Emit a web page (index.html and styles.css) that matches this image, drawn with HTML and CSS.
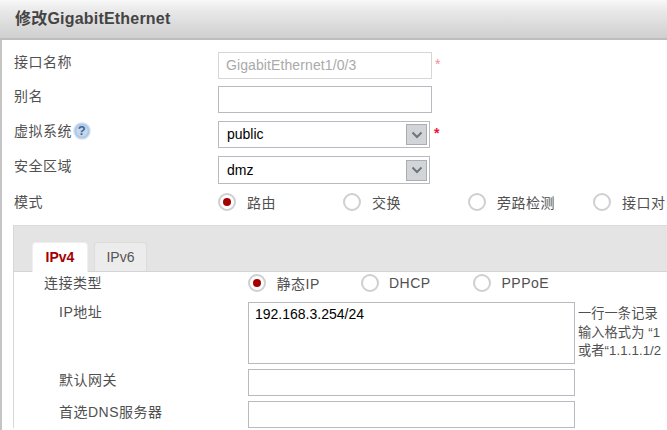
FILE: index.html
```html
<!DOCTYPE html>
<html lang="zh">
<head>
  <meta charset="UTF-8">
  <meta name="viewport" content="width=device-width, initial-scale=1.0">
  <title>修改GigabitEthernet</title>
  <link rel="stylesheet" href="styles.css">
</head>
<body>
  <div class="dialog-title">修改GigabitEthernet</div>

  <div class="dialog-body">
    <!-- Interface fields -->
    <div class="row row-name">
      <div class="label">接口名称</div>
      <div class="field field-disabled">GigabitEthernet1/0/3</div>
      <span class="required required-faded">*</span>
    </div>
    <div class="row row-alias">
      <div class="label">别名</div>
      <div class="field"></div>
    </div>
    <div class="row row-vsys">
      <div class="label">虚拟系统<svg class="help-icon" viewBox="0 0 18 18" width="18" height="18">
          <circle cx="9" cy="9" r="8" fill="#a9c6e6" stroke="#cfdeee" stroke-width="1.4"/>
          <circle cx="9" cy="9" r="5.8" fill="#c6d8ec"/>
          <text x="9" y="13.2" text-anchor="middle" class="help-mark">?</text>
        </svg></div>
      <div class="select"><span>public</span><span class="select-btn"><svg viewBox="0 0 12 8" width="12" height="8"><path d="M1.5 1.5 L6 6 L10.5 1.5" fill="none" stroke="#70757c" stroke-width="2"/></svg></span></div>
      <span class="required">*</span>
    </div>
    <div class="row row-zone">
      <div class="label">安全区域</div>
      <div class="select select-tall"><span>dmz</span><span class="select-btn"><svg viewBox="0 0 12 8" width="12" height="8"><path d="M1.5 1.5 L6 6 L10.5 1.5" fill="none" stroke="#70757c" stroke-width="2"/></svg></span></div>
    </div>
    <div class="row row-mode">
      <div class="label">模式</div>
      <div class="radio-group">
        <div class="radio-item"><span class="radio checked"></span>路由</div>
        <div class="radio-item"><span class="radio"></span>交换</div>
        <div class="radio-item"><span class="radio"></span>旁路检测</div>
        <div class="radio-item"><span class="radio"></span>接口对</div>
      </div>
    </div>

    <!-- IP tabs -->
    <div class="tab-panel">
      <div class="tab-strip">
        <div class="tab active">IPv4</div>
        <div class="tab">IPv6</div>
      </div>
      <div class="tab-content">
        <div class="row row-conn">
          <div class="label">连接类型</div>
          <div class="radio-group radio-group-small">
            <div class="radio-item"><span class="radio checked"></span>静态IP</div>
            <div class="radio-item"><span class="radio"></span>DHCP</div>
            <div class="radio-item"><span class="radio"></span>PPPoE</div>
          </div>
        </div>
        <div class="row row-ip">
          <div class="label">IP地址</div>
          <div class="field field-area">192.168.3.254/24</div>
          <div class="hint">一行一条记录<br>输入格式为 “1<br>或者“1.1.1.1/2</div>
        </div>
        <div class="row row-gateway">
          <div class="label">默认网关</div>
          <div class="field field-wide"></div>
        </div>
        <div class="row row-dns">
          <div class="label">首选DNS服务器</div>
          <div class="field field-wide"></div>
        </div>
      </div>
    </div>
  </div>
</body>
</html>
```

FILE: styles.css
```css
/* General styles */
html, body {
  margin: 0;
  padding: 0;
  height: 430px;
  overflow: hidden;
  background: #fff;
}

body {
  font-family: 'Liberation Sans', 'Noto Sans CJK SC', sans-serif;
  font-size: 14px;
  color: #505050;
}

/* Title bar */
.dialog-title {
  height: 38px;
  line-height: 38px;
  padding-left: 15px;
  font-size: 16px;
  letter-spacing: 0.2px;
  font-weight: bold;
  color: #444;
  background: linear-gradient(#f8f8f8, #e8e8e8 30%, #cfcfcf);
  border-bottom: 2px solid #bdbdbd;
}

.dialog-body {
  height: 390px;
  padding-top: 12px;
  box-sizing: border-box;
  border-left: 2px solid #c4c4c4;
  overflow: hidden;
}

/* Form rows */
.row {
  display: flex;
  white-space: nowrap;
}

.label {
  width: 204px;
  padding-left: 12px;
  line-height: 20px;
  letter-spacing: 0.5px;
  flex-shrink: 0;
  display: flex;
  align-items: center;
  align-self: flex-start;
}

.row-name { height: 34px; }
.row-alias { height: 35px; }
.row-vsys { height: 35px; }
.row-zone { height: 34px; }
.row-mode { height: 24px; align-items: center; }
.row-mode .label { align-self: center; }

.help-icon {
  margin-left: 1px;
}

.help-mark {
  font-family: 'Liberation Sans', sans-serif;
  font-size: 13px;
  font-weight: bold;
  fill: #3f6398;
}

.field {
  width: 214px;
  height: 27px;
  box-sizing: border-box;
  border: 1px solid #b9b9c0;
  background: #fff;
  padding-left: 8px;
  line-height: 25px;
  color: #000;
}

.field-disabled {
  border-color: #d6d6d6;
  color: #aaa;
  padding-left: 7px;
  letter-spacing: 0.1px;
}

.field-wide {
  width: 327px;
}

.field-area {
  width: 327px;
  height: 62px;
  padding-left: 6px;
  line-height: 22px;
  flex-shrink: 0;
}

.select {
  width: 212px;
  height: 27px;
  box-sizing: border-box;
  border: 1px solid #b9b9c0;
  padding: 0 2px 0 8px;
  line-height: 25px;
  color: #000;
  display: flex;
  justify-content: space-between;
  align-items: center;
}

.select-tall {
  height: 28px;
}

.select-btn {
  width: 21px;
  height: 21px;
  box-sizing: border-box;
  border: 1px solid #a9aeb4;
  background: #d2d5d8;
  display: flex;
  justify-content: center;
  align-items: center;
}

.required {
  margin-left: 4px;
  color: #f01030;
  font-size: 14px;
  line-height: 24px;
  font-weight: bold;
}

.required-faded {
  color: #f58a96;
  margin-left: 3px;
  font-weight: normal;
}

/* Radios */
.radio-group {
  display: flex;
}

.radio-item {
  width: 125px;
  letter-spacing: 0.5px;
  display: flex;
  align-items: center;
  flex-shrink: 0;
}

.radio-item:last-child {
  width: auto;
}

.radio {
  width: 18px;
  height: 18px;
  box-sizing: border-box;
  border: 2px solid #cfcfcf;
  border-radius: 50%;
  background: #fff;
  margin-right: 11px;
  display: flex;
  justify-content: center;
  align-items: center;
}

.radio.checked::after {
  content: "";
  width: 8px;
  height: 8px;
  border-radius: 50%;
  background: #a40000;
}

.radio-group-small .radio-item {
  width: 112.5px;
}

.radio-group-small .radio {
  margin-right: 10.5px;
}

/* Tab panel */
.tab-panel {
  margin: 11px 0 0 11px;
  border-left: 1px solid #d8d8d8;
  border-top: 1px solid #dcdcdc;
}

.tab-strip {
  height: 46px;
  padding-left: 18px;
  box-sizing: border-box;
  background: #e4e4e4;
  border-bottom: 1px solid #d4d4d4;
  display: flex;
  align-items: flex-end;
  gap: 6px;
}

.tab {
  width: 53px;
  height: 29px;
  line-height: 28px;
  text-align: center;
  box-sizing: border-box;
  background: #ececec;
  border: 1px solid #dcdcdc;
  border-bottom: none;
  border-radius: 4px 4px 0 0;
  color: #555;
  font-size: 14px;
}

.tab.active {
  width: 56px;
  height: 30px;
  margin-bottom: -1px;
  background: #fff;
  border-color: #eee;
  color: #a40000;
  font-weight: bold;
}

.tab-content .label {
  width: 203px;
  padding-left: 45px;
  box-sizing: border-box;
  flex-shrink: 0;
}

.row-conn {
  height: 30px;
  padding-bottom: 8px;
  box-sizing: border-box;
  align-items: center;
}

.row-conn .label {
  padding-left: 30px;
  align-self: center;
}

.row-conn .radio-group {
  margin-left: 31px;
}

.row-ip .field,
.row-gateway .field,
.row-dns .field {
  margin-left: 31px;
}

.row-ip { height: 67px; }
.row-gateway { height: 32px; }

.row-gateway .label,
.row-dns .label { margin-top: 1px; }

.hint {
  margin: 3px 0 0 3px;
  font-size: 13.2px;
  letter-spacing: 0.1px;
  line-height: 18.5px;
}
```
